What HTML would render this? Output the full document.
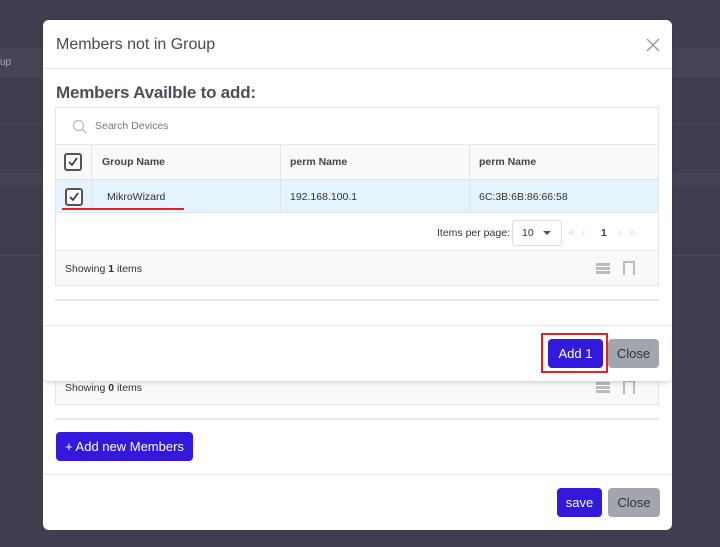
<!DOCTYPE html>
<html><head><meta charset="utf-8"><style>
*{box-sizing:border-box;margin:0;padding:0}
body{width:720px;height:547px;overflow:hidden;background:#3f3e4e;font-family:"Liberation Sans",sans-serif;position:relative}
.a{position:absolute}
.t{font-size:11px;color:#333}
.btn{position:absolute;border-radius:4px;color:#fff;font-size:13px;display:flex;align-items:center;justify-content:center}
.cb{position:absolute;width:18px;height:18px;border:2px solid #555;border-radius:3px;background:#fff}
.cb svg{position:absolute;left:1px;top:1px}
.grid{position:absolute;width:14px;height:11px;background:repeating-linear-gradient(90deg,#bbb 0 4px,transparent 4px 5px),#bbb;}
.grid::after{content:"";position:absolute;left:0;top:3px;width:14px;height:1px;background:#fff;box-shadow:0 4px 0 #fff}
</style></head><body>
<div class="a" style="left:0;top:48px;width:720px;height:28px;background:#454455"></div>
<div class="a" style="left:0;top:76px;width:720px;height:1px;background:#4c4b5c"></div>
<div class="a" style="left:0;top:123px;width:720px;height:1px;background:#4a4959"></div>
<div class="a" style="left:0;top:173px;width:720px;height:13px;background:#444353"></div>
<div class="a" style="left:0;top:255px;width:720px;height:1px;background:#4a4959"></div>
<div class="a t" style="left:0;top:57px;color:#aaa;font-size:10px">up</div>

<!-- outer modal -->
<div class="a" style="left:43px;top:20px;width:629px;height:510px;background:#fff;border-radius:6px"></div>
<div class="a" style="left:55px;top:370px;width:604px;height:35px;background:#f8f9fa;border:1px solid #e3e5e8;border-top:none"></div>
<div class="a t" style="left:65px;top:382px;font-size:10.5px">Showing <b>0</b> items</div>
<div class="a" style="left:55px;top:418px;width:604px;height:2px;background:#e6e7ea"></div>
<div class="btn" style="left:56px;top:432px;width:137px;height:29px;background:#3219dc">+ Add new Members</div>
<div class="a" style="left:43px;top:474px;width:629px;height:1px;background:#e6e7ea"></div>
<div class="btn" style="left:557px;top:488px;width:45px;height:29px;background:#3219dc">save</div>
<div class="btn" style="left:608px;top:488px;width:52px;height:29px;background:#a0a5ae;color:#333">Close</div>
<div class="grid" style="left:596px;top:382px"></div>
<div class="a" style="left:623px;top:380px;width:12px;height:14px;border:2px solid #bbb;border-bottom:none"></div>

<!-- inner modal -->
<div class="a" style="left:43px;top:20px;width:629px;height:361px;background:#fff;border-radius:6px;box-shadow:0 2px 4px rgba(0,0,0,.15)"></div>
<div class="a" style="left:56px;top:36px;font-size:16px;color:#444a55">Members not in Group</div>
<svg class="a" style="left:645px;top:37px" width="16" height="16"><path d="M2 2L14 14M14 2L2 14" stroke="#999" stroke-width="1.4"/></svg>
<div class="a" style="left:43px;top:68px;width:629px;height:1px;background:#e6e7ea"></div>
<div class="a" style="left:56px;top:83px;font-size:17px;font-weight:bold;color:#4a4f5a;letter-spacing:-0.2px">Members Availble to add:</div>

<div class="a" style="left:55px;top:107px;width:604px;height:179px;border:1px solid #e6e7ea"></div>
<svg class="a" style="left:72px;top:119px" width="16" height="16"><circle cx="6.5" cy="6.5" r="5" fill="none" stroke="#bbb" stroke-width="1.3"/><path d="M10 10L14 14" stroke="#bbb" stroke-width="1.3"/></svg>
<div class="a t" style="left:95px;top:120px;color:#777;font-size:10.5px">Search Devices</div>
<div class="a" style="left:56px;top:144px;width:602px;height:36px;background:#f8f9fa;border-top:1px solid #e9eaec;border-bottom:1px solid #e0e2e5"></div>
<div class="a" style="left:56px;top:180px;width:602px;height:33px;background:#e5f4fc;border-bottom:1px solid #d6e8f2"></div>
<div class="a" style="left:91px;top:144px;width:1px;height:69px;background:#e2e4e7"></div>
<div class="a" style="left:280px;top:144px;width:1px;height:69px;background:#e2e4e7"></div>
<div class="a" style="left:469px;top:144px;width:1px;height:69px;background:#e2e4e7"></div>
<div class="cb" style="left:64px;top:153px"><svg width="12" height="12"><path d="M2 6L5 9L10 2" fill="none" stroke="#333" stroke-width="1.6"/></svg></div>
<div class="cb" style="left:65px;top:188px"><svg width="12" height="12"><path d="M2 6L5 9L10 2" fill="none" stroke="#333" stroke-width="1.6"/></svg></div>
<div class="a t" style="left:102px;top:156px;font-weight:bold;color:#444;font-size:10.5px">Group Name</div>
<div class="a t" style="left:290px;top:156px;font-weight:bold;color:#444;font-size:10.5px">perm Name</div>
<div class="a t" style="left:479px;top:156px;font-weight:bold;color:#444;font-size:10.5px">perm Name</div>
<div class="a t" style="left:107px;top:191px;font-size:10.5px">MikroWizard</div>
<div class="a t" style="left:290px;top:191px;font-size:10.5px">192.168.100.1</div>
<div class="a t" style="left:479px;top:191px;font-size:10.5px">6C:3B:6B:86:66:58</div>
<div class="a" style="left:62px;top:208px;width:122px;height:2px;background:#e0202a"></div>

<div class="a t" style="left:437px;top:227px;font-size:10.5px">Items per page:</div>
<div class="a" style="left:512px;top:220px;width:50px;height:26px;border:1px solid #ddd;border-radius:3px"></div>
<div class="a t" style="left:522px;top:227px;font-size:10.5px">10</div>
<div class="a" style="left:543px;top:231px;width:0;height:0;border-left:4px solid transparent;border-right:4px solid transparent;border-top:4px solid #555"></div>
<div class="a t" style="left:568px;top:225px;color:#ddd;font-size:12px">«&nbsp;&nbsp;‹</div>
<div class="a t" style="left:601px;top:227px;font-weight:bold;color:#444;font-size:10.5px">1</div>
<div class="a t" style="left:618px;top:225px;color:#ddd;font-size:12px">›&nbsp;&nbsp;»</div>
<div class="a" style="left:56px;top:250px;width:602px;height:35px;background:#f8f9fa;border-top:1px solid #e9eaec"></div>
<div class="a t" style="left:65px;top:263px;font-size:10.5px">Showing <b>1</b> items</div>
<div class="grid" style="left:596px;top:263px"></div>
<div class="a" style="left:623px;top:261px;width:12px;height:14px;border:2px solid #bbb;border-bottom:none"></div>

<div class="a" style="left:55px;top:299px;width:604px;height:2px;background:#e6e7ea"></div>
<div class="a" style="left:43px;top:325px;width:629px;height:1px;background:#e6e7ea"></div>
<div class="a" style="left:541px;top:333px;width:67px;height:40px;border:2px solid #e0202a"></div>
<div class="btn" style="left:548px;top:339px;width:55px;height:29px;background:#3219dc">Add 1</div>
<div class="btn" style="left:608px;top:339px;width:51px;height:29px;background:#a0a5ae;color:#333">Close</div>
</body></html>
